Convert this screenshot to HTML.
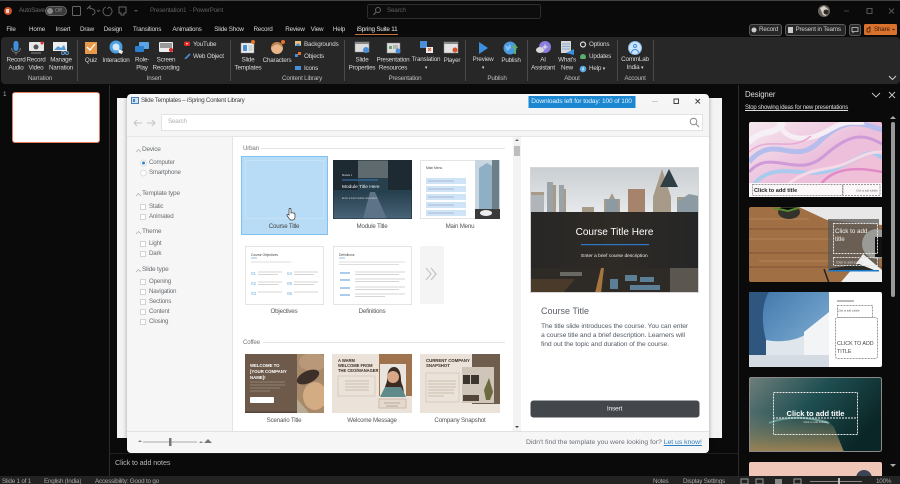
<!DOCTYPE html>
<html><head><meta charset="utf-8"><style>
*{box-sizing:border-box}
html,body{margin:0;padding:0;background:#0a0a0a}
#p{position:relative;width:900px;height:484px;overflow:hidden;background:#0a0a0a;font-family:"Liberation Sans",sans-serif;color:#d8d8d8;letter-spacing:-.2px}
.a{position:absolute}
.t{position:absolute;white-space:nowrap;line-height:10px;font-size:6.3px;transform:translateY(-50%)}
.c{position:absolute;white-space:nowrap;line-height:10px;font-size:6.3px;transform:translate(-50%,-50%);text-align:center}
.g{color:#bdbdbd}
.s{position:absolute;width:1px;background:#4a4a4a;top:40px;height:41px}
.d{color:#6a6e72;font-size:6.2px}
.h{font-size:6.5px}
.cb{position:absolute;left:140px;width:6px;height:6px;border:1px solid #d4d4d4;background:#fff}
.l{color:#555;font-size:6.2px}
svg{position:absolute;overflow:hidden}
svg text{letter-spacing:0}
</style></head><body><div id="p">

<!-- title bar -->
<div class="a" style="left:0;top:0;width:900px;height:1px;background:#444"></div>
<svg style="left:0;top:0" width="900" height="37">
<circle cx="8" cy="11" r="4" fill="#c8502a"/><rect x="6" y="9" width="3" height="4" fill="#f3d0c0"/>
<rect x="45.500" y="6.500" width="21" height="9" rx="4.500" fill="#3a3a3a" stroke="#666"/><circle cx="50" cy="11" r="3" fill="#8a8a8a"/>
<rect x="72.500" y="6.500" width="8" height="9" rx="1" fill="none" stroke="#666"/>
<path d="M87 9l3-3v2.500c4 0 5 2 5 3.500s-2 3-3 3" fill="none" stroke="#666"/><path d="M97 10l1.500 1.500 1.500-1.500" fill="none" stroke="#555"/>
<path d="M106 7a4.500 4.500 0 1 0 3 0l-1.500 2" fill="none" stroke="#666" stroke-width=".9"/>
<path d="M119 7h7v6h-2v2h-3v-2h-2z" fill="none" stroke="#666"/>
<path d="M134 10h4l-2 2z" fill="#555"/>
<rect x="367.500" y="4.500" width="173" height="14" rx="2" fill="#0d0d0d" stroke="#2e2e2e"/>
<circle cx="378" cy="10" r="2.500" fill="none" stroke="#666"/><path d="M376 12l-2.500 3" stroke="#666"/>
<circle cx="824" cy="11" r="6" fill="#6b625b"/><path d="M820 8l4-2 4 3-2 7-3-1z" fill="#d5d2cc"/><circle cx="826" cy="12" r="2.500" fill="#2d2a28"/>
<path d="M844 11h5" stroke="#444"/><rect x="867" y="8.500" width="5" height="5" fill="none" stroke="#555"/><path d="M889 8.500l5 5m0-5l-5 5" stroke="#555"/>
<rect x="749.500" y="24.500" width="32" height="11" rx="2.500" fill="#262626" stroke="#5a5a5a"/>
<circle cx="754" cy="30" r="2.500" fill="#ccc"/>
<rect x="785.500" y="24.500" width="60" height="11" rx="2.500" fill="#262626" stroke="#5a5a5a"/>
<rect x="788" y="27" width="5" height="6" fill="#ccc"/>
<rect x="849.500" y="24.500" width="11" height="11" rx="2" fill="#262626" stroke="#5a5a5a"/><path d="M852 27.500h6v4h-4l-1 1v-1h-1z" fill="none" stroke="#ccc" stroke-width=".8"/>
<rect x="864" y="24" width="33" height="11" rx="1.500" fill="#d8722d"/>
<path d="M867 32v-3l3-2v5z" fill="none" stroke="#3a1c08" stroke-width=".8"/>
<path d="M892 29h3l-1.500 1.500z" fill="#3a1c08"/>
</svg>
<div class="t" style="left:19px;top:11px;color:#6a6a6a">AutoSave</div>
<div class="t" style="left:55px;top:11px;color:#888;font-size:5.500px">Off</div>
<div class="t" style="left:150px;top:11px;color:#5f5f5f">Presentation1 &nbsp;- PowerPoint</div>
<div class="t" style="left:387px;top:11px;color:#5f5f5f">Search</div>
<div class="t" style="left:759px;top:30px;color:#ccc">Record</div>
<div class="t" style="left:795.500px;top:30px;color:#ccc">Present in Teams</div>
<div class="t" style="left:874px;top:30px;color:#3a1c08">Share</div>

<!-- tabs -->
<div class="c" style="left:11px;top:30px">File</div><div class="c" style="left:37px;top:30px">Home</div><div class="c" style="left:63px;top:30px">Insert</div><div class="c" style="left:87px;top:30px">Draw</div><div class="c" style="left:113px;top:30px">Design</div><div class="c" style="left:147px;top:30px">Transitions</div><div class="c" style="left:187px;top:30px">Animations</div><div class="c" style="left:229px;top:30px">Slide Show</div><div class="c" style="left:263px;top:30px">Record</div><div class="c" style="left:295px;top:30px">Review</div><div class="c" style="left:317px;top:30px">View</div><div class="c" style="left:339px;top:30px">Help</div>
<div class="c" style="left:377px;top:30px;color:#eee">iSpring Suite 11</div>
<div class="a" style="left:355px;top:34px;width:43px;height:1px;background:#c8703a"></div>

<!-- ribbon -->
<div class="a" style="left:1px;top:37px;width:899px;height:47px;background:#272727;border-radius:4px"></div>
<div class="s" style="left:77px"></div><div class="s" style="left:230px"></div><div class="s" style="left:344px"></div><div class="s" style="left:465px"></div><div class="s" style="left:527px"></div><div class="s" style="left:617px"></div><div class="s" style="left:653px"></div>
<svg style="left:0;top:37px" width="900" height="22" viewBox="0 37 900 22">
<rect x="13.500" y="41" width="5" height="10" rx="2.500" fill="#3f8fe0"/><path d="M11.500 48a4.500 4.500 0 0 0 9 0M16 53v2" fill="none" stroke="#777"/>
<rect x="29" y="42" width="15" height="9" rx="1" fill="#e8e8e8"/><circle cx="36" cy="47" r="2.500" fill="#555"/><circle cx="42" cy="43" r="1.500" fill="#e03030"/><path d="M31 53h10" stroke="#888"/>
<rect x="53" y="42" width="14" height="9" fill="#eee"/><path d="M54 50l4-4 3 2 3-3 2 5z" fill="#5a9bd4"/><circle cx="63" cy="53" r="1.500" fill="none" stroke="#6a9ac8"/><circle cx="67" cy="53" r="1.500" fill="none" stroke="#6a9ac8"/>
<rect x="85" y="42" width="12" height="12" fill="#e89a4a"/><path d="M87 47l3 3 5-6" fill="none" stroke="#fff" stroke-width="1.300"/>
<circle cx="116" cy="47" r="6.500" fill="#4d9fe0"/><circle cx="116" cy="47" r="3.500" fill="#d3e8f8"/><path d="M118 49l5 2-1 3-3-1z" fill="#eee"/>
<rect x="139" y="42" width="10" height="7" rx="1" fill="#5aa5e5"/><rect x="135" y="46" width="9" height="6" rx="1" fill="#2b7fcc"/>
<rect x="159" y="42" width="14" height="10" rx="1" fill="#eee"/><rect x="160" y="43" width="12" height="5" fill="#999"/><circle cx="171" cy="50" r="2" fill="#d92b2b"/>
<rect x="184" y="41.500" width="6" height="4.500" rx="1" fill="#d9292a"/><path d="M186.300 42.700l2 1-2 1z" fill="#fff"/>
<path d="M185 59l5-5" stroke="#4a88c8" stroke-width="1.800"/>
<rect x="241" y="43" width="13" height="10" fill="#eee" stroke="#888" stroke-width=".5"/><rect x="243" y="45" width="4" height="6" fill="#4a90d8"/><path d="M248.500 46h4M248.500 48h4M248.500 50h4" stroke="#8aa" stroke-width=".7"/><circle cx="253" cy="42" r="2" fill="#e8722a"/>
<circle cx="277" cy="48" r="6" fill="#e8b68a"/><path d="M271 48a6 6 0 0 1 12 0l-2-2-4-2-4 2z" fill="#b9824f"/><circle cx="283" cy="42" r="2" fill="#e8722a"/>
<rect x="295" y="41" width="6" height="5" fill="#e8c27a"/><path d="M295 46l3-3 3 3z" fill="#4a90d8"/>
<rect x="295" y="54" width="3" height="3" fill="#4a90d8"/><rect x="298" y="52" width="3" height="3" fill="#e8722a"/>
<rect x="355" y="42" width="14" height="10" fill="#ddd" stroke="#888" stroke-width=".5"/><rect x="355" y="42" width="14" height="2" fill="#888"/><circle cx="366" cy="50" r="3" fill="#4a90d8"/>
<rect x="387" y="43" width="13" height="10" fill="#ddd" stroke="#888" stroke-width=".5"/><rect x="389" y="46" width="3" height="3" fill="#6aa66a"/><path d="M393 46h5M393 48h5" stroke="#777" stroke-width=".7"/><circle cx="398" cy="51" r="2.500" fill="#4a90d8"/>
<rect x="420" y="41" width="7" height="7" fill="#4a90d8"/><rect x="426" y="47" width="7" height="6" fill="#eee"/><path d="M428 48l3 3m0-3l-3 3" stroke="#d9502a"/>
<rect x="444" y="42" width="14" height="11" fill="#e4e4e4" stroke="#888" stroke-width=".5"/><rect x="444" y="42" width="14" height="2" fill="#8a8a8a"/><circle cx="455" cy="50" r="2.500" fill="#d9502a"/>
<path d="M479 42l9 6-9 6z" fill="#3b8fe0"/>
<circle cx="510" cy="48" r="6.500" fill="#4a9ae0"/><path d="M505 45l3 2 2-3 1 4-4 3z" fill="#8cc3ee"/><path d="M514 54v-6h-2l3-4 3 4h-2v6z" fill="#5cae6c"/>
<circle cx="545" cy="47" r="6" fill="#8a7fe0"/><path d="M542.500 47h5M545 44.500v5" stroke="#eee"/><ellipse cx="540" cy="50" rx="4" ry="3" fill="#d8d8d8"/>
<rect x="561" y="41" width="10" height="12" fill="#d6d6d6"/><path d="M562 44h8M562 46.500h8M562 49h8" stroke="#6aa0d8" stroke-width=".8"/><path d="M566 53l8-4v6z" fill="#3b8fe0"/>
<circle cx="583" cy="44.500" r="2.500" fill="none" stroke="#ddd" stroke-width="1.200"/>
<circle cx="583" cy="57" r="3" fill="#5cae6c"/>
</svg>
<svg style="left:0;top:59px" width="900" height="14" viewBox="0 59 900 14"><circle cx="583" cy="69" r="3.300" fill="#58a7e0"/><rect x="582.500" y="67.500" width="1" height="3" fill="#fff"/><rect x="295" y="66" width="6" height="4" fill="#4a90d8"/></svg>
<div class="a" style="left:628px;top:41px;width:14px;height:14px;border-radius:50%;background:#cfe4f5;border:1px solid #7fbbe8"></div>
<div class="a" style="left:633px;top:44px;width:4px;height:4px;border-radius:50%;border:1px solid #3b8fe0"></div>
<div class="a" style="left:631px;top:49px;width:8px;height:4px;border-radius:4px 4px 0 0;border:1px solid #3b8fe0;border-bottom:0"></div>

<div class="c" style="left:16px;top:64px;line-height:7.500px">Record<br>Audio</div>
<div class="c" style="left:36px;top:64px;line-height:7.500px">Record<br>Video</div>
<div class="c" style="left:61px;top:64px;line-height:7.500px">Manage<br>Narration</div>
<div class="c" style="left:91px;top:60.500px">Quiz</div>
<div class="c" style="left:116px;top:60.500px">Interaction</div>
<div class="c" style="left:142px;top:64px;line-height:7.500px">Role-<br>Play</div>
<div class="c" style="left:166px;top:64px;line-height:7.500px">Screen<br>Recording</div>
<div class="t" style="left:193px;top:44.500px">YouTube</div>
<div class="t" style="left:193px;top:57px">Web Object</div>
<div class="c" style="left:248px;top:64px;line-height:7.500px">Slide<br>Templates</div>
<div class="c" style="left:277px;top:60.500px">Characters</div>
<div class="t" style="left:304px;top:44.500px">Backgrounds</div>
<div class="t" style="left:304px;top:57px">Objects</div>
<div class="t" style="left:304px;top:69px">Icons</div>
<div class="c" style="left:362px;top:64px;line-height:7.500px">Slide<br>Properties</div>
<div class="c" style="left:393px;top:64px;line-height:7.500px">Presentation<br>Resources</div>
<div class="c" style="left:426px;top:64px;line-height:7.500px">Translation<br><span style="font-size:5px">▾</span></div>
<div class="c" style="left:452px;top:60.500px">Player</div>
<div class="c" style="left:483px;top:64px;line-height:7.500px">Preview<br><span style="font-size:5px">▾</span></div>
<div class="c" style="left:511px;top:60.500px">Publish</div>
<div class="c" style="left:543px;top:64px;line-height:7.500px">AI<br>Assistant</div>
<div class="c" style="left:567px;top:64px;line-height:7.500px">What's<br>New</div>
<div class="t" style="left:589px;top:44.500px">Options</div>
<div class="t" style="left:589px;top:57px">Updates</div>
<div class="t" style="left:589px;top:69px">Help <span style="font-size:5px">▾</span></div>
<div class="c" style="left:635px;top:64px;line-height:7.500px">CommLab<br>India <span style="font-size:5px">▾</span></div>
<div class="c g" style="left:40px;top:79px">Narration</div><div class="c g" style="left:154px;top:79px">Insert</div><div class="c g" style="left:302px;top:79px">Content Library</div><div class="c g" style="left:405px;top:79px">Presentation</div><div class="c g" style="left:497px;top:79px">Publish</div><div class="c g" style="left:572px;top:79px">About</div><div class="c g" style="left:635px;top:79px">Account</div>
<svg style="left:888px;top:74px" width="10" height="8"><path d="M1 2l3.500 3.500L8 2" fill="none" stroke="#ccc"/></svg>

<!-- left pane -->
<div class="a" style="left:109px;top:85px;width:1px;height:391px;background:#2c2c2c"></div>
<div class="t" style="left:3px;top:95px;color:#aaa">1</div>
<div class="a" style="left:12px;top:92px;width:88px;height:51px;background:#fff;border:1.500px solid #e27d5f;border-radius:3px"></div>

<!-- slide behind -->
<div class="a" style="left:117px;top:98px;width:605px;height:340px;background:#f3f3f3"></div>
<div class="t" style="left:115px;top:463px;color:#b5b5b5;font-size:7.200px;letter-spacing:-.1px">Click to add notes</div>
<div class="a" style="left:110px;top:453px;width:628px;height:1px;background:#1e1e1e"></div>

<!-- status bar -->
<div class="a" style="left:0;top:476px;width:900px;height:8px;background:#232323"></div>
<div class="t" style="left:2px;top:482px;color:#aaa">Slide 1 of 1</div>
<div class="t" style="left:44px;top:482px;color:#aaa">English (India)</div>
<div class="t" style="left:95px;top:482px;color:#aaa">Accessibility: Good to go</div>
<div class="t" style="left:653px;top:482px;color:#aaa">Notes</div>
<div class="t" style="left:683px;top:482px;color:#aaa">Display Settings</div>
<div class="t" style="left:876px;top:482px;color:#aaa">100%</div>
<div class="a" style="left:810px;top:481px;width:52px;height:1px;background:#888"></div>
<div class="a" style="left:838px;top:478px;width:2px;height:6px;background:#bbb"></div>
<svg style="left:740px;top:478px" width="62" height="6"><rect x="1" y="1" width="7" height="5" fill="none" stroke="#999"/><rect x="16" y="1" width="7" height="5" fill="none" stroke="#999"/><rect x="35" y="1" width="7" height="5" fill="#888"/><rect x="54" y="1" width="7" height="5" fill="none" stroke="#999"/></svg>

<!-- designer -->
<div class="a" style="left:738px;top:85px;width:1px;height:391px;background:#2c2c2c"></div>
<div class="t" style="left:745px;top:95px;color:#ddd;font-size:7.800px;letter-spacing:-.1px">Designer</div>
<svg style="left:870px;top:90px" width="28" height="10"><path d="M2 3l4 4 4-4" fill="none" stroke="#ccc" stroke-width=".9"/><path d="M19 2l6 6m0-6l-6 6" stroke="#ccc" stroke-width=".9"/></svg>
<div class="t" style="left:745px;top:108px;color:#ddd;font-size:6px;text-decoration:underline">Stop showing ideas for new presentations</div>
<svg style="left:888px;top:113px" width="10" height="365"><path d="M2 6l3-3 3 3z" fill="#aaa"/><rect x="3" y="9" width="4" height="175" rx="2" fill="#999"/><path d="M2 351l3 3 3-3z" fill="#aaa"/></svg>

<!-- designer thumbs -->
<svg style="left:749px;top:122px" width="133" height="75" viewBox="0 0 133 75">
<defs><linearGradient id="m" x1="0" y1="0" x2="1" y2="1"><stop offset="0" stop-color="#f5e8ee"/><stop offset=".5" stop-color="#ecbfdc"/><stop offset="1" stop-color="#f2c0d4"/></linearGradient></defs>
<rect width="133" height="75" fill="url(#m)" rx="2"/>
<path d="M0 40C25 10 45 45 70 20S110 0 133 8" fill="none" stroke="#b4bdec" stroke-width="5"/>
<path d="M0 50C22 25 48 58 75 34S115 12 133 22" fill="none" stroke="#cf9ad8" stroke-width="3"/>
<path d="M5 62C28 36 58 60 88 46S120 26 133 36" fill="none" stroke="#a8cbee" stroke-width="4"/>
<path d="M30 0C35 20 60 20 80 8S105 2 115 0" fill="none" stroke="#f7eef3" stroke-width="5"/>
<path d="M72 62C85 45 110 45 133 50" fill="none" stroke="#e28ac8" stroke-width="2.500"/>
<path d="M0 20C15 5 25 15 35 0" fill="none" stroke="#f4f0f5" stroke-width="6"/>
<path d="M0 30C20 12 40 32 62 14" fill="none" stroke="#e6a8d4" stroke-width="1.500"/>
<path d="M40 62C60 44 80 50 100 40S125 30 133 30" fill="none" stroke="#f6d9e6" stroke-width="3"/>
<rect y="61" width="133" height="14" fill="#fbf7f8"/>
<rect x="3.500" y="62.500" width="90" height="11" fill="none" stroke="#999" stroke-dasharray="2 1"/><rect x="94" y="62.500" width="37" height="11" fill="none" stroke="#999" stroke-dasharray="2 1"/>
<text x="5" y="70" font-family="Liberation Sans" font-size="5.600" font-weight="bold" fill="#222">Click to add title</text>
<text x="107" y="69.500" font-family="Liberation Sans" font-size="2.500" fill="#666">Click to add subtitle</text>
</svg>
<svg style="left:749px;top:207px" width="133" height="75" viewBox="0 0 133 75">
<rect width="133" height="75" fill="#a06f44" rx="2"/>
<path d="M0 22h133M0 46h133M0 60h133" stroke="#8a5e38" stroke-width="1.500"/><path d="M0 32h90M10 54h80M0 12h60" stroke="#b5845a"/>
<path d="M50 0h83v18l-55-5z" fill="#e8e8e8"/><ellipse cx="40" cy="5" rx="11" ry="7" fill="#33332c"/><path d="M25 1l14 3 10-3" stroke="#5a8a2a" stroke-width="2"/>
<rect x="79" y="12" width="51" height="50" fill="#5a5a58" opacity=".75"/>
<circle cx="128" cy="37" r="15" fill="#9a9a96"/><rect x="126" y="30" width="7" height="20" fill="#111"/>
<path d="M92 75l12-14 10-14 19 16v12z" fill="#f0f0f0"/><path d="M80 62l30-5 15 6H80z" fill="#2a2a28"/>
<rect x="84.500" y="16.500" width="44" height="30" fill="none" stroke="#e6e6e6" stroke-dasharray="2 1"/><rect x="84.500" y="50.500" width="44" height="8" fill="none" stroke="#ddd" stroke-dasharray="2 1"/>
<rect x="79" y="63" width="51" height="1.500" fill="#1a78c8"/>
<text x="86" y="26" font-family="Liberation Sans" font-size="6.200" fill="#f2f2f2">Click to add</text><text x="86" y="34" font-family="Liberation Sans" font-size="6.200" fill="#f2f2f2">title</text>
<text x="87" y="56.500" font-family="Liberation Sans" font-size="3.200" fill="#ddd">Click to add subtitle</text>
<path d="M75 62l5 14" stroke="#222" stroke-width="1.500"/>
</svg>
<svg style="left:749px;top:292px" width="133" height="75" viewBox="0 0 133 75">
<defs><linearGradient id="sk" x1="0" y1="0" x2="1" y2="1"><stop offset="0" stop-color="#3c74a8"/><stop offset="1" stop-color="#8cb8dc"/></linearGradient></defs>
<rect width="133" height="75" fill="#fff" rx="2"/><rect width="80" height="75" fill="url(#sk)"/>
<path d="M0 0h20c-7 10-8 30-3 48v17H0z" fill="#2f567f"/>
<path d="M17 48c25 5 50-5 63-28v43H17z" fill="#dfe6ec"/><path d="M55 40l25-20v43H55z" fill="#f3f4f5"/>
<rect y="63" width="80" height="12" fill="#d4dbe2"/>
<path d="M88 9h17" stroke="#777"/>
<rect x="88.500" y="13.500" width="35" height="12" fill="none" stroke="#999" stroke-dasharray="2 1"/>
<rect x="86.500" y="25.500" width="42" height="41" rx="2" fill="#fff" stroke="#999" stroke-dasharray="2 1"/>
<text x="89" y="19.500" font-family="Liberation Sans" font-size="2.500" fill="#555">Click to add subtitle</text>
<text x="88" y="53" font-family="Liberation Sans" font-size="5.300" fill="#444">CLICK TO ADD</text><text x="88" y="61" font-family="Liberation Sans" font-size="5.300" fill="#444">TITLE</text>
</svg>
<svg style="left:749px;top:377px" width="133" height="75" viewBox="0 0 133 75">
<defs><linearGradient id="w" x1="0" y1="0" x2="1" y2=".5"><stop offset="0" stop-color="#6f7f7c"/><stop offset=".5" stop-color="#1f4f52"/><stop offset="1" stop-color="#0b2626"/></linearGradient><linearGradient id="w2" x1="0" y1="0" x2="0" y2="1"><stop offset="0" stop-color="#8a8a72" stop-opacity="0"/><stop offset="1" stop-color="#9c8252"/></linearGradient></defs>
<rect width="133" height="75" fill="url(#w)" rx="2"/>
<path d="M0 35h70l15 15 10 25H0z" fill="url(#w2)"/><path d="M20 46c20-8 40-6 60 0" stroke="#6a9a98" stroke-width="2" fill="none"/>
<rect x=".500" y=".500" width="132" height="74" rx="2" fill="none" stroke="#8a8a8a"/>
<rect x="24.500" y="15.500" width="84" height="42" fill="none" stroke="#e8e8e8" stroke-dasharray="2 1"/><path d="M24 41h85" stroke="#eee" stroke-dasharray="2 1"/>
<text x="66.500" y="39" font-family="Liberation Sans" font-size="7.500" font-weight="bold" fill="#fff" text-anchor="middle">Click to add title</text>
<text x="66.500" y="46" font-family="Liberation Sans" font-size="2.800" fill="#ddd" text-anchor="middle">Click to add subtitle</text>
</svg>
<div class="a" style="left:749px;top:462px;width:133px;height:14px;background:#f0c6b8;border-radius:2px 2px 0 0;overflow:hidden"><div class="a" style="left:107px;top:8px;width:16px;height:16px;border-radius:50%;background:#3a4454"></div></div>

<!-- dialog -->
<div class="a" style="left:127px;top:94px;width:582px;height:359px;background:#f6f6f6;border-radius:4px;box-shadow:0 0 5px rgba(0,0,0,.35);overflow:hidden">
 <div class="a" style="left:0;top:11px;width:582px;height:31px;background:#f5f5f5"></div>
 <div class="a" style="left:0;top:42px;width:582px;height:1px;background:#e6e6e6"></div>
 <div class="a" style="left:105px;top:43px;width:477px;height:294px;background:#fff"></div>
 <div class="a" style="left:105px;top:43px;width:1px;height:294px;background:#e4e4e4"></div>
 <div class="a" style="left:386px;top:43px;width:8px;height:294px;background:#f3f3f3"></div>
 <div class="a" style="left:0;top:337px;width:582px;height:1px;background:#e2e2e2"></div>
</div>
<svg style="left:131px;top:96px" width="9" height="9"><rect x=".5" y="1.500" width="7" height="6" fill="#cfe3f5" stroke="#4a7fb0"/><rect x="2" y="3" width="2" height="3" fill="#4a7fb0"/></svg>
<div class="t" style="left:141px;top:101px;color:#444;font-size:6.200px;letter-spacing:-.25px">Slide Templates – iSpring Content Library</div>
<div class="c" style="left:581.500px;top:101.500px;width:107px;height:12px;background:#1b87d0;color:#e8f4fc;font-size:6.500px;letter-spacing:-.1px;line-height:12px">Downloads left for today: 100 of 100</div>
<svg style="left:650px;top:96px" width="55" height="11"><path d="M2 5.500h6" stroke="#ccc"/><rect x="24" y="3" width="4.500" height="4.500" fill="none" stroke="#444"/><path d="M45.500 3l4.500 4.500m0-4.500l-4.500 4.500" stroke="#444"/></svg>
<svg style="left:132px;top:117px" width="24" height="12"><path d="M10 6H2m3-3L2 6l3 3" fill="none" stroke="#c4c4c4"/><path d="M15 6h8m-3-3l3 3-3 3" fill="none" stroke="#c4c4c4"/></svg>
<div class="a" style="left:160.500px;top:114px;width:542px;height:17px;background:#fff;border:1px solid #e2e2e2"></div>
<div class="t" style="left:168px;top:122px;color:#b0b0b0;font-size:6.300px">Search</div>
<svg style="left:688px;top:116px" width="12" height="12"><circle cx="5.500" cy="5.500" r="3.300" fill="none" stroke="#888"/><path d="M8 8l3 3" stroke="#888"/></svg>

<!-- sidebar -->
<svg style="left:135px;top:145px" width="20" height="190"><g fill="none" stroke="#aaa" stroke-width=".7"><path d="M1 7l2.500-2.500L6 7"/><path d="M1 51l2.500-2.500L6 51"/><path d="M1 89l2.500-2.500L6 89"/><path d="M1 127l2.500-2.500L6 127"/></g><circle cx="8.500" cy="18" r="3" fill="#fff" stroke="#ddd"/><circle cx="8.500" cy="18" r="1.500" fill="#2b84d0"/><circle cx="8.500" cy="28" r="3" fill="#fff" stroke="#ddd"/></svg>
<div class="t d h" style="left:142px;top:150px">Device</div>
<div class="t d" style="left:149px;top:163px">Computer</div><div class="t d" style="left:149px;top:173px">Smartphone</div>
<div class="t d h" style="left:142px;top:194px">Template type</div>
<div class="t d" style="left:149px;top:207px">Static</div><div class="t d" style="left:149px;top:217px">Animated</div>
<div class="t d h" style="left:142px;top:232px">Theme</div>
<div class="t d" style="left:149px;top:244px">Light</div><div class="t d" style="left:149px;top:254px">Dark</div>
<div class="t d h" style="left:142px;top:270px">Slide type</div>
<div class="t d" style="left:149px;top:282px">Opening</div><div class="t d" style="left:149px;top:292px">Navigation</div><div class="t d" style="left:149px;top:302px">Sections</div><div class="t d" style="left:149px;top:312px">Content</div><div class="t d" style="left:149px;top:322px">Closing</div>
<div class="cb" style="top:204px"></div><div class="cb" style="top:214px"></div><div class="cb" style="top:241px"></div><div class="cb" style="top:251px"></div><div class="cb" style="top:279px"></div><div class="cb" style="top:289px"></div><div class="cb" style="top:299px"></div><div class="cb" style="top:309px"></div><div class="cb" style="top:319px"></div>

<!-- grid -->
<div class="t" style="left:243px;top:149px;color:#777;font-size:6.200px">Urban</div>
<div class="a" style="left:261px;top:148px;width:244px;height:1px;background:#e4e4e4"></div>
<div class="a" style="left:241px;top:156px;width:87px;height:79px;background:#b8dcf6;border:1px solid #7fc1f2"></div>
<div class="a" style="left:245px;top:160px;width:79px;height:59px;border:1px solid #c6e2f6"></div>
<div class="c l" style="left:284px;top:227px;color:#444">Course Title</div>
<svg style="left:286px;top:207px" width="10" height="14"><path d="M3 2.500c0-1.500 2-1.500 2 0V6c2-.5 4 0 4 1.500V10c0 2-1 3-3 3H5C3.500 13 3 11 1 8.500c-.5-1 1-1.500 2-.5z" fill="#fff" stroke="#333" stroke-width=".7"/></svg>

<svg style="left:333px;top:160px" width="79" height="59" viewBox="0 0 79 59">
<defs><linearGradient id="mt" x1="0" y1="0" x2="0" y2="1"><stop offset="0" stop-color="#2f3d48"/><stop offset=".55" stop-color="#26404f"/><stop offset="1" stop-color="#4a6478"/></linearGradient></defs>
<rect width="79" height="59" fill="url(#mt)"/><path d="M0 0h25v30H0zM55 0h24v30H55z" fill="#1e2a32"/><path d="M25 0h30v18H25z" fill="#5e6a6e"/><path d="M30 59l7-27h5l12 27z" fill="#5d7488"/>
<rect width="79" height="59" fill="none" stroke="#1a2a34"/><path d="M9 20h36" stroke="#3a7ab8"/>
<text x="9" y="16" font-family="Liberation Sans" font-size="2.500" fill="#ddd">Module 1</text>
<text x="9" y="28" font-family="Liberation Sans" font-size="4.800" fill="#eee">Module Title Here</text>
<text x="9" y="39" font-family="Liberation Sans" font-size="2.500" fill="#ccc">Enter a brief module description</text>
</svg>
<div class="c l" style="left:372px;top:227px">Module Title</div>

<svg style="left:420px;top:160px" width="80" height="59" viewBox="0 0 80 59">
<rect x=".5" y=".5" width="79" height="58" fill="#fff" stroke="#e4e4e4"/>
<text x="6" y="9" font-family="Liberation Sans" font-size="3.300" fill="#444">Main Menu</text>
<g fill="#cfe4f6"><rect x="6" y="18" width="40" height="6"/><rect x="6" y="26" width="40" height="6"/><rect x="6" y="34" width="40" height="6"/><rect x="6" y="42" width="40" height="6"/><rect x="6" y="50" width="40" height="6"/></g>
<rect x="55" y="0" width="25" height="59" fill="#c7d6df"/><path d="M59 8l8-5 5 3v43H59z" fill="#8fb0c4"/><path d="M72 0h7v50h-7z" fill="#6d7f88"/><rect x="55" y="49" width="25" height="10" fill="#3a3a3a"/><ellipse cx="66" cy="53" rx="6" ry="3" fill="#eee"/>
<g stroke="#88a" stroke-width=".5"><path d="M8 21h26M8 29h26M8 37h26M8 45h26M8 53h26"/></g>
</svg>
<div class="c l" style="left:460px;top:227px">Main Menu</div>

<svg style="left:245px;top:246px" width="79" height="59" viewBox="0 0 79 59">
<rect x=".5" y=".5" width="78" height="58" fill="#fff" stroke="#e4e4e4"/>
<text x="6" y="10" font-family="Liberation Sans" font-size="3.300" fill="#444">Course Objectives</text><path d="M6 12h6" stroke="#4a90d8" stroke-width=".6"/><path d="M6 16h40" stroke="#bbb" stroke-width=".6"/>
<g font-family="Liberation Sans" font-size="4.500" fill="#6aaee0"><text x="6" y="29">01</text><text x="6" y="39">02</text><text x="6" y="49">03</text><text x="42" y="29">04</text><text x="42" y="39">05</text><text x="42" y="49">06</text></g>
<g stroke="#aaa" stroke-width=".6"><path d="M13 26h24M13 28.500h20M13 36h24M13 38.500h20M13 46h24M49 26h24M49 28.500h20M49 36h24M49 38.500h20M49 46h24"/></g>
</svg>
<div class="c l" style="left:284px;top:312px">Objectives</div>
<svg style="left:333px;top:246px" width="79" height="59" viewBox="0 0 79 59">
<rect x=".5" y=".5" width="78" height="58" fill="#fff" stroke="#e4e4e4"/>
<text x="6" y="10" font-family="Liberation Sans" font-size="3.300" fill="#444">Definitions</text><path d="M6 12h6" stroke="#4a90d8" stroke-width=".6"/><path d="M6 16h66M6 18.500h60" stroke="#bbb" stroke-width=".6"/>
<g stroke="#5a9ad8" stroke-width="1"><path d="M7 27h10M7 34h10M7 42h10M7 49h10"/></g>
<g stroke="#aaa" stroke-width=".6"><path d="M22 26h50M22 28.500h44M22 33h50M22 35.500h44M22 41h50M22 43.500h44M22 48h50M22 50.500h30"/></g>
</svg>
<div class="c l" style="left:372px;top:312px">Definitions</div>
<div class="a" style="left:420px;top:246px;width:24px;height:58px;background:#f4f4f4;border-radius:1px"></div>
<svg style="left:425px;top:267px" width="14" height="14"><path d="M1 1l5 6-5 6M6 1l5 6-5 6" fill="none" stroke="#c4c4c4" stroke-width="1.200"/></svg>

<div class="t" style="left:243px;top:343px;color:#777;font-size:6.200px">Coffee</div>
<div class="a" style="left:263px;top:342px;width:242px;height:1px;background:#e4e4e4"></div>

<svg style="left:245px;top:354px" width="79" height="59" viewBox="0 0 79 59">
<rect width="79" height="59" fill="#6d5a4a"/><rect x="52" width="27" height="59" fill="#a88a6a"/><ellipse cx="68" cy="8" rx="14" ry="9" fill="#b89878"/><ellipse cx="63" cy="23" rx="12" ry="6" transform="rotate(-25 63 23)" fill="#3d3028"/><ellipse cx="70" cy="42" rx="12" ry="14" fill="#d4ac84"/><path d="M52 45l12 14H52z" fill="#b8ab94"/>
<g font-family="Liberation Sans" font-weight="bold" font-size="4.300" fill="#fff"><text x="5" y="13">WELCOME TO</text><text x="5" y="19">[YOUR COMPANY</text><text x="5" y="25">NAME]!</text></g>
<g stroke="#b5a698" stroke-width=".6"><path d="M5 28h35M5 31h35M5 34h30M5 37h20"/></g>
<rect x="5" y="43" width="24" height="6" rx="1" fill="#fff"/><rect y="57.500" width="52" height="1.500" fill="#55453a"/>
</svg>
<div class="c l" style="left:284px;top:421px">Scenario Title</div>
<svg style="left:332px;top:354px" width="80" height="59" viewBox="0 0 80 59">
<rect width="80" height="59" fill="#ebe2d9"/><rect x="47" width="33" height="42" fill="#a0734f"/><rect x="48" y="10" width="26" height="33" fill="#e9e4dd"/><path d="M52 43c0-12 3-13 3-17 0-9 3-13 7-13s7 4 7 13c0 4 3 5 3 17z" fill="#3c2b22"/><circle cx="61" cy="23" r="6" fill="#d8a888"/><path d="M48 43l5-10h16l5 10z" fill="#5f8a8a"/>
<g font-family="Liberation Sans" font-weight="bold" font-size="4.100" fill="#3a2d24"><text x="6" y="8">A WARM</text><text x="6" y="13">WELCOME FROM</text><text x="6" y="18">THE CEO/MANAGER</text></g>
<rect x="6" y="22" width="37" height="20" fill="none" stroke="#d8ccc0"/><g stroke="#a89888" stroke-width=".6"><path d="M13 27h24M13 30h24M13 33h24M13 36h24"/></g>
<rect x="47" y="45" width="27" height="9" fill="#e4d9cc" stroke="#cbbcae"/><path d="M52 49h16M54 52h12" stroke="#877" stroke-width=".6"/>
</svg>
<div class="c l" style="left:372px;top:421px">Welcome Message</div>
<svg style="left:420px;top:354px" width="80" height="59" viewBox="0 0 80 59">
<rect width="80" height="59" fill="#ebe2d9"/><rect x="52" width="28" height="50" fill="#6f5d4e"/><rect x="42" y="13" width="32" height="36" fill="#cfc5b8"/><rect x="43" y="21" width="7" height="9" fill="#3b3530"/><rect x="51" y="21" width="8" height="9" fill="#3b3530"/><path d="M69 24l4 14-3 8h-4l-2-10z" fill="#6a6a3e"/><rect x="43" y="41" width="16" height="6" fill="#54453a"/>
<g font-family="Liberation Sans" font-weight="bold" font-size="4.300" fill="#3a2d24"><text x="6" y="8">CURRENT COMPANY</text><text x="6" y="13">SNAPSHOT</text></g>
<rect x="6" y="19" width="33" height="29" fill="none" stroke="#d8ccc0"/><g stroke="#a89888" stroke-width=".6"><path d="M8 27h28M8 30h28M8 33h28M8 36h26M8 39h26M8 42h16"/></g>
</svg>
<div class="c l" style="left:460px;top:421px">Company Snapshot</div>

<!-- scrollbar -->
<svg style="left:513px;top:137px" width="8" height="294"><path d="M2 4l2-2 2 2z" fill="#666"/><rect x="1" y="9" width="6" height="10" fill="#bdbdbd"/><path d="M2 289l2 2 2-2z" fill="#444"/></svg>

<!-- preview -->
<svg style="left:530px;top:167px" width="169" height="126" viewBox="0 0 169 126">
<defs><linearGradient id="pk" x1="0" y1="0" x2="0" y2="1"><stop offset="0" stop-color="#c9ced2"/><stop offset=".45" stop-color="#eef0f1"/></linearGradient><linearGradient id="pb" x1="0" y1="0" x2="1" y2="0"><stop offset="0" stop-color="#4f4a44"/><stop offset=".5" stop-color="#6b5a46"/><stop offset="1" stop-color="#3f4448"/></linearGradient></defs>
<rect width="169" height="126" fill="url(#pk)"/>
<path d="M0 25h14v25h6V18h6v32h6V22h4v28h16V40h12v10h10V32h5l3-6 3 6h5v18h15V24h10v26h8V30l9-28 9 28v20h6V30h8v96H0z" fill="#a89a88"/>
<path d="M17 15h6v30h-6zM29 18h5v30h-5z" fill="#9aa3a8"/><path d="M76 32h12v25H76zM147 35l12-8 10 2v25h-22z" fill="#8b9aa3"/>
<path d="M130 20l9-18 9 18z" fill="#2f3d44"/><rect x="98" y="22" width="17" height="34" fill="#a6836b"/><rect x="0" y="28" width="14" height="30" fill="#b0b5ba"/>
<rect y="45" width="169" height="81" fill="url(#pb)"/>
<rect y="101" width="169" height="25" fill="#2e2b27"/><path d="M65 126l6-25h3l-3 25z" fill="#a5753e"/><path d="M95 108h12v6H95zM110 110h14v5h-14zM100 118h30v5h-30zM80 112h8v10h-8z" fill="#5d7f96"/><path d="M140 101h29v25h-29z" fill="#5c5650"/><path d="M0 112h45l-12 14H0z" fill="#4a3a2a"/><path d="M30 105h22v4H30z" fill="#6a6a62"/>
<rect y="45" width="169" height="56" fill="#1e1e1e" opacity=".78"/>
<rect x=".5" y=".5" width="168" height="125" fill="none" stroke="#d6d6d6"/>
<text x="84.500" y="68" font-family="Liberation Sans" font-size="10" fill="#fff" text-anchor="middle">Course Title Here</text>
<rect x="51" y="77" width="68" height="1.200" fill="#2f78c4"/>
<text x="84.500" y="90" font-family="Liberation Sans" font-size="4.800" fill="#eee" text-anchor="middle">Enter a brief course description</text>
</svg>
<div class="t" style="left:541px;top:311px;color:#5a6068;font-size:9px;letter-spacing:0">Course Title</div>
<div class="t" style="left:541px;top:326.500px;color:#555c64;font-size:6.800px;letter-spacing:-.1px">The title slide introduces the course. You can enter</div>
<div class="t" style="left:541px;top:335.500px;color:#555c64;font-size:6.800px;letter-spacing:-.1px">a course title and a brief description. Learners will</div>
<div class="t" style="left:541px;top:344.500px;color:#555c64;font-size:6.800px;letter-spacing:-.1px">find out the topic and duration of the course.</div>
<div class="c" style="left:614.500px;top:408.500px;width:169px;height:17px;background:#43474c;border-radius:3px;color:#f0f0f0;line-height:17px;font-size:6.600px">Insert</div>

<!-- footer -->
<svg style="left:134px;top:436px" width="80" height="12"><path d="M9 6h54" stroke="#aaa"/><rect x="35" y="2" width="2.500" height="8" fill="#777"/><path d="M4 6l2-2 2 2zM0 0" fill="#888"/><path d="M70 7l4-4 4 4z" fill="#777"/><path d="M65 7l2-2 2 2z" fill="#888"/></svg>
<div class="t" style="left:526px;top:443px;color:#6b7076;font-size:6.800px;letter-spacing:0">Didn't find the template you were looking for? <span style="color:#2c7fc0;text-decoration:underline">Let us know!</span></div>

</div></body></html>
